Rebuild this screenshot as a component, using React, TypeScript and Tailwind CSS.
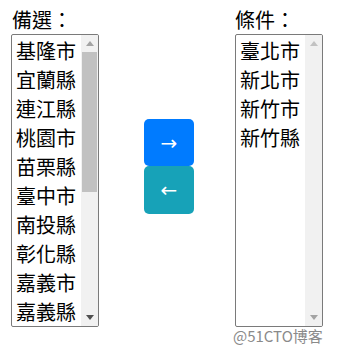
import React from "react";

const left = ["基隆市", "宜蘭縣", "連江縣", "桃園市", "苗栗縣", "臺中市", "南投縣", "彰化縣", "嘉義市", "嘉義縣"];
const right = ["臺北市", "新北市", "新竹市", "新竹縣"];

function Up({ c }: { c: string }) {
  return (
    <svg width="8" height="5" viewBox="0 0 8 5">
      <polygon points="0,5 8,5 4,0" fill={c} />
    </svg>
  );
}
function Down({ c }: { c: string }) {
  return (
    <svg width="8" height="5" viewBox="0 0 8 5">
      <polygon points="0,0 8,0 4,5" fill={c} />
    </svg>
  );
}

function ListBox({ items, thumb }: { items: string[]; thumb: boolean }) {
  return (
    <div className="w-[88px] h-[293px] border border-[#7a7a7a] rounded-[2px] flex overflow-hidden bg-white">
      <div className="flex-1 pl-[4px] pt-[1px] overflow-hidden">
        {items.map((t) => (
          <div key={t} className="h-[29px] leading-[29px] text-[20px] text-black whitespace-nowrap">
            {t}
          </div>
        ))}
      </div>
      <div className="w-[17px] bg-[#f1f1f1] flex flex-col">
        <div className="h-[17px] flex items-center justify-center">
          <Up c={thumb ? "#a3a3a3" : "#c2c2c2"} />
        </div>
        <div className="flex-1 flex flex-col">
          {thumb && <div className="h-[140px] mx-[1px] bg-[#c1c1c1]" />}
        </div>
        <div className="h-[17px] flex items-center justify-center">
          <Down c={thumb ? "#505050" : "#a3a3a3"} />
        </div>
      </div>
    </div>
  );
}

export default function App() {
  return (
    <div className="relative w-[340px] h-[352px] bg-white flex items-start font-['Noto_Sans_CJK_TC',sans-serif] text-black">
      <div className="ml-[11px] pt-[5px] flex flex-col">
        <div className="h-[29px] leading-[29px] text-[20px] pl-[1px]">備選：</div>
        <ListBox items={left} thumb />
      </div>
      <div className="ml-[45px] mt-[119px] w-[50px] flex flex-col">
        <button className="h-[47px] rounded-[5px] bg-[#007bff] text-white text-[20px] flex items-center justify-center font-['DejaVu_Sans',sans-serif]">
          →
        </button>
        <button className="h-[48px] rounded-[5px] bg-[#17a2b8] text-white text-[20px] flex items-center justify-center font-['DejaVu_Sans',sans-serif]">
          ←
        </button>
      </div>
      <div className="ml-[41px] pt-[5px] flex flex-col">
        <div className="h-[29px] leading-[29px] text-[20px]">條件：</div>
        <ListBox items={right} thumb={false} />
      </div>
      <div className="absolute left-[233px] top-[326px] text-[15px] leading-[20px] text-[#8a8a8a]">@51CTO博客</div>
    </div>
  );
}
